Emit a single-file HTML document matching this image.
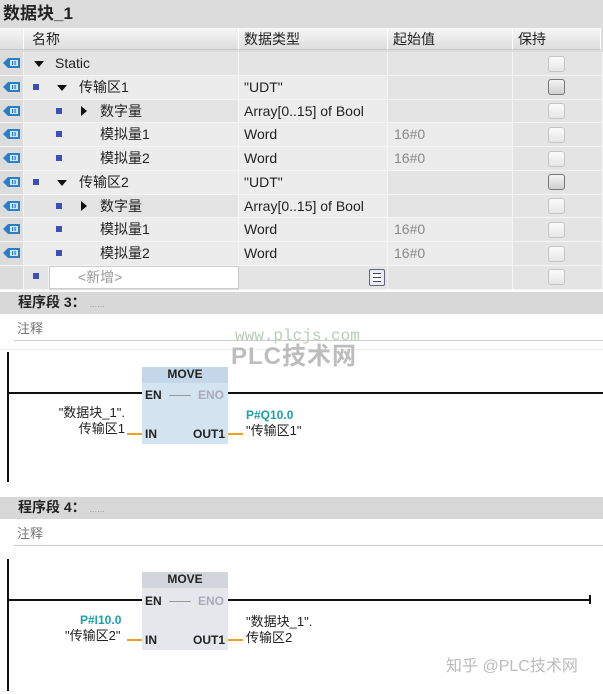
<!DOCTYPE html>
<html><head><meta charset="utf-8"><style>
*{margin:0;padding:0;box-sizing:border-box}
body{width:603px;height:694px;background:#fff;position:relative;overflow:hidden;font-family:"Liberation Sans","Noto Sans CJK SC",sans-serif;color:#222}
.a{position:absolute}
.t{font-size:14px;line-height:23px;white-space:nowrap}
.cell{position:absolute;background:#e4e4e4;border-right:1px solid #f4f4f4;border-bottom:1px solid #f4f4f4}
.sq{position:absolute;width:6px;height:6px;background:#3c4fb8}
.cb{position:absolute;left:548px;width:17px;height:16px;border:1px solid #c4c4c4;border-radius:3px;background:linear-gradient(#fbfbfb,#e6e6e6)}
.cb.d{border-color:#777;background:linear-gradient(#f4f4f4,#cfcfcf)}
.tri{position:absolute;width:0;height:0}
.dn{border-left:5px solid transparent;border-right:5px solid transparent;border-top:6px solid #111}
.rt{border-top:5px solid transparent;border-bottom:5px solid transparent;border-left:6px solid #111}
.g{color:#888}
.hdr{background:linear-gradient(#f6f6f6,#dedede);border-right:1px solid #fff;border-bottom:1px solid #c8c8c8}
</style></head><body>
<div class="a" style="left:0;top:0;width:603px;height:290px;background:#dcdcdc"></div>
<div class="a t" style="left:3px;top:2px;font-size:17px;font-weight:bold;line-height:24px">数据块_1</div>
<div class="a hdr" style="left:0;top:28px;width:24px;height:22px"></div>
<div class="a hdr t" style="left:24px;top:28px;width:215px;height:22px;padding-left:8px;line-height:22px">名称</div>
<div class="a hdr t" style="left:239px;top:28px;width:149px;height:22px;padding-left:5px;line-height:22px">数据类型</div>
<div class="a hdr t" style="left:388px;top:28px;width:125px;height:22px;padding-left:5px;line-height:22px">起始值</div>
<div class="a hdr t" style="left:513px;top:28px;width:88px;height:22px;padding-left:5px;line-height:22px">保持</div>

<div class="cell" style="left:0;top:52px;width:24px;height:24px;background:#dcdcdc"></div><div class="cell" style="left:24px;top:52px;width:215px;height:24px"></div><div class="cell" style="left:239px;top:52px;width:149px;height:24px"></div><div class="cell" style="left:388px;top:52px;width:125px;height:24px"></div><div class="cell" style="left:513px;top:52px;width:90px;height:24px"></div>
<div class="cell" style="left:0;top:76px;width:24px;height:24px;background:#dcdcdc"></div><div class="cell" style="left:24px;top:76px;width:215px;height:24px;background:#ececec"></div><div class="cell" style="left:239px;top:76px;width:149px;height:24px;background:#ececec"></div><div class="cell" style="left:388px;top:76px;width:125px;height:24px"></div><div class="cell" style="left:513px;top:76px;width:90px;height:24px"></div>
<div class="cell" style="left:0;top:100px;width:24px;height:23px;background:#dcdcdc"></div><div class="cell" style="left:24px;top:100px;width:215px;height:23px"></div><div class="cell" style="left:239px;top:100px;width:149px;height:23px;background:#ececec"></div><div class="cell" style="left:388px;top:100px;width:125px;height:23px"></div><div class="cell" style="left:513px;top:100px;width:90px;height:23px"></div>
<div class="cell" style="left:0;top:123px;width:24px;height:24px;background:#dcdcdc"></div><div class="cell" style="left:24px;top:123px;width:215px;height:24px;background:#ececec"></div><div class="cell" style="left:239px;top:123px;width:149px;height:24px;background:#ececec"></div><div class="cell" style="left:388px;top:123px;width:125px;height:24px;background:#ececec"></div><div class="cell" style="left:513px;top:123px;width:90px;height:24px"></div>
<div class="cell" style="left:0;top:147px;width:24px;height:24px;background:#dcdcdc"></div><div class="cell" style="left:24px;top:147px;width:215px;height:24px;background:#ececec"></div><div class="cell" style="left:239px;top:147px;width:149px;height:24px;background:#ececec"></div><div class="cell" style="left:388px;top:147px;width:125px;height:24px;background:#ececec"></div><div class="cell" style="left:513px;top:147px;width:90px;height:24px"></div>
<div class="cell" style="left:0;top:171px;width:24px;height:24px;background:#dcdcdc"></div><div class="cell" style="left:24px;top:171px;width:215px;height:24px;background:#ececec"></div><div class="cell" style="left:239px;top:171px;width:149px;height:24px;background:#ececec"></div><div class="cell" style="left:388px;top:171px;width:125px;height:24px"></div><div class="cell" style="left:513px;top:171px;width:90px;height:24px"></div>
<div class="cell" style="left:0;top:195px;width:24px;height:23px;background:#dcdcdc"></div><div class="cell" style="left:24px;top:195px;width:215px;height:23px"></div><div class="cell" style="left:239px;top:195px;width:149px;height:23px;background:#ececec"></div><div class="cell" style="left:388px;top:195px;width:125px;height:23px"></div><div class="cell" style="left:513px;top:195px;width:90px;height:23px"></div>
<div class="cell" style="left:0;top:218px;width:24px;height:24px;background:#dcdcdc"></div><div class="cell" style="left:24px;top:218px;width:215px;height:24px;background:#ececec"></div><div class="cell" style="left:239px;top:218px;width:149px;height:24px;background:#ececec"></div><div class="cell" style="left:388px;top:218px;width:125px;height:24px;background:#ececec"></div><div class="cell" style="left:513px;top:218px;width:90px;height:24px"></div>
<div class="cell" style="left:0;top:242px;width:24px;height:24px;background:#dcdcdc"></div><div class="cell" style="left:24px;top:242px;width:215px;height:24px;background:#ececec"></div><div class="cell" style="left:239px;top:242px;width:149px;height:24px;background:#ececec"></div><div class="cell" style="left:388px;top:242px;width:125px;height:24px;background:#ececec"></div><div class="cell" style="left:513px;top:242px;width:90px;height:24px"></div>
<div class="cell" style="left:0;top:266px;width:24px;height:24px;background:#dcdcdc"></div><div class="cell" style="left:24px;top:266px;width:25px;height:24px"></div><div class="a" style="left:49px;top:266px;width:190px;height:23px;background:#fff;border:1px solid #ccc"></div><div class="cell" style="left:239px;top:266px;width:149px;height:24px"></div><div class="cell" style="left:388px;top:266px;width:125px;height:24px"></div><div class="cell" style="left:513px;top:266px;width:90px;height:24px"></div>

<svg class="a" style="left:0;top:52px" width="24" height="216" viewBox="0 0 24 216">
<defs><g id="tg"><path d="M3 5 L8 0 H20 V10 H8 Z" fill="#2a7fc4"/><rect x="10" y="2" width="8" height="6" fill="#cfe6f6"/><rect x="12" y="3" width="1.2" height="4" fill="#2a7fc4"/><rect x="14.5" y="3" width="1.2" height="4" fill="#2a7fc4"/></g></defs>
<use href="#tg" y="6"/><use href="#tg" y="30"/><use href="#tg" y="54"/><use href="#tg" y="77"/><use href="#tg" y="101"/><use href="#tg" y="125"/><use href="#tg" y="149"/><use href="#tg" y="172"/><use href="#tg" y="196"/>
</svg>
<div class="sq" style="left:33px;top:84px"></div><div class="sq" style="left:33px;top:179px"></div><div class="sq" style="left:33px;top:273px"></div>
<div class="sq" style="left:56px;top:108px"></div><div class="sq" style="left:56px;top:131px"></div><div class="sq" style="left:56px;top:155px"></div>
<div class="sq" style="left:56px;top:203px"></div><div class="sq" style="left:56px;top:226px"></div><div class="sq" style="left:56px;top:250px"></div>
<div class="tri dn" style="left:34px;top:61px"></div>
<div class="tri dn" style="left:57px;top:85px"></div>
<div class="tri dn" style="left:57px;top:180px"></div>
<div class="tri rt" style="left:81px;top:106px"></div>
<div class="tri rt" style="left:81px;top:201px"></div>

<div class="a t" style="left:55px;top:52px">Static</div>
<div class="a t" style="left:79px;top:76px">传输区1</div>
<div class="a t" style="left:100px;top:100px">数字量</div>
<div class="a t" style="left:100px;top:123px">模拟量1</div>
<div class="a t" style="left:100px;top:147px">模拟量2</div>
<div class="a t" style="left:79px;top:171px">传输区2</div>
<div class="a t" style="left:100px;top:195px">数字量</div>
<div class="a t" style="left:100px;top:218px">模拟量1</div>
<div class="a t" style="left:100px;top:242px">模拟量2</div>
<div class="a t g" style="left:78px;top:266px;color:#999">&lt;新增&gt;</div>
<div class="a" style="left:369px;top:269px;width:16px;height:17px;border:1px solid #667;background:#e8eef8;border-radius:2px"><div style="margin:3px 3px;height:9px;border-top:1px solid #446;border-bottom:1px solid #446;background:linear-gradient(#fff 3px,#446 3px,#446 4px,#fff 4px)"></div></div>

<div class="a t" style="left:244px;top:76px">"UDT"</div>
<div class="a t" style="left:244px;top:100px">Array[0..15] of Bool</div>
<div class="a t" style="left:244px;top:123px">Word</div>
<div class="a t" style="left:244px;top:147px">Word</div>
<div class="a t" style="left:244px;top:171px">"UDT"</div>
<div class="a t" style="left:244px;top:195px">Array[0..15] of Bool</div>
<div class="a t" style="left:244px;top:218px">Word</div>
<div class="a t" style="left:244px;top:242px">Word</div>
<div class="a t g" style="left:394px;top:123px">16#0</div>
<div class="a t g" style="left:394px;top:147px">16#0</div>
<div class="a t g" style="left:394px;top:218px">16#0</div>
<div class="a t g" style="left:394px;top:242px">16#0</div>

<div class="cb" style="top:56px"></div><div class="cb d" style="top:79px"></div><div class="cb" style="top:103px"></div><div class="cb" style="top:127px"></div><div class="cb" style="top:151px"></div><div class="cb d" style="top:174px"></div><div class="cb" style="top:198px"></div><div class="cb" style="top:222px"></div><div class="cb" style="top:246px"></div><div class="cb" style="top:269px"></div>

<div class="a" style="left:0;top:292px;width:603px;height:22px;background:#d8d8d8"></div>
<div class="a t" style="left:18px;top:291px;font-weight:bold;font-size:14px">程序段 3： <span style="font-weight:normal;color:#999;font-size:9px">......</span></div>
<div class="a" style="left:14px;top:317px;width:589px;height:24px;border-bottom:1px solid #ccc"></div>
<div class="a t" style="left:17px;top:317px;font-size:13px;color:#777">注释</div>
<div class="a" style="left:0;top:349px;width:603px;height:1px;background:#eee"></div>
<div class="a t" style="left:235px;top:325px;font-family:'Liberation Mono',monospace;color:#b8ccb8;font-size:16px">www.plcjs.com</div>
<div class="a t" style="left:231px;top:343px;font-size:24px;line-height:28px;font-weight:bold;color:#bdbdbd;letter-spacing:1px">PLC技术网</div>
<div class="a" style="left:7px;top:352px;width:2px;height:130px;background:#111"></div>
<div class="a" style="left:7px;top:392px;width:135px;height:2px;background:#111"></div>
<div class="a" style="left:227px;top:392px;width:376px;height:2px;background:#111"></div>
<div class="a" style="left:142px;top:367px;width:86px;height:77px;background:#d3e3f0"></div>
<div class="a" style="left:142px;top:367px;width:86px;height:16px;background:#c3d7e8"></div>
<div class="a t" style="left:142px;top:364px;width:86px;text-align:center;font-size:12px;font-weight:bold;line-height:20px">MOVE</div>
<div class="a t" style="left:145px;top:384px;font-size:12px;font-weight:bold">EN</div>
<div class="a" style="left:169px;top:395px;width:22px;height:1px;background:#999"></div>
<div class="a t" style="left:198px;top:384px;font-size:12px;font-weight:bold;color:#aab">ENO</div>
<div class="a t" style="left:145px;top:424px;font-size:12px;font-weight:bold;line-height:20px">IN</div>
<div class="a t" style="left:193px;top:424px;font-size:12px;font-weight:bold;line-height:20px">OUT1</div>
<div class="a" style="left:127px;top:433px;width:15px;height:2px;background:#f0a020"></div>
<div class="a" style="left:228px;top:433px;width:15px;height:2px;background:#f0a020"></div>
<div class="a t" style="left:55px;top:405px;font-size:13px;line-height:16px;text-align:right;width:70px">"数据块_1".<br>传输区1</div>
<div class="a t" style="left:246px;top:407px;font-size:12px;font-weight:bold;color:#1aa0a8;line-height:16px">P#Q10.0</div>
<div class="a t" style="left:246px;top:423px;font-size:13px;line-height:16px">"传输区1"</div>

<div class="a" style="left:0;top:497px;width:603px;height:22px;background:#d8d8d8"></div>
<div class="a t" style="left:18px;top:496px;font-weight:bold;font-size:14px">程序段 4： <span style="font-weight:normal;color:#999;font-size:9px">......</span></div>
<div class="a" style="left:14px;top:522px;width:589px;height:24px;border-bottom:1px solid #ccc"></div>
<div class="a t" style="left:17px;top:522px;font-size:13px;color:#777">注释</div>
<div class="a" style="left:7px;top:559px;width:2px;height:132px;background:#111"></div>
<div class="a" style="left:7px;top:599px;width:135px;height:2px;background:#111"></div>
<div class="a" style="left:227px;top:599px;width:363px;height:2px;background:#111"></div>
<div class="a" style="left:589px;top:595px;width:2px;height:9px;background:#111"></div>
<div class="a" style="left:142px;top:572px;width:86px;height:78px;background:#e6e7ec"></div>
<div class="a" style="left:142px;top:572px;width:86px;height:16px;background:#d3d5dc"></div>
<div class="a t" style="left:142px;top:569px;width:86px;text-align:center;font-size:12px;font-weight:bold;line-height:20px">MOVE</div>
<div class="a t" style="left:145px;top:590px;font-size:12px;font-weight:bold">EN</div>
<div class="a" style="left:169px;top:601px;width:22px;height:1px;background:#999"></div>
<div class="a t" style="left:198px;top:590px;font-size:12px;font-weight:bold;color:#aab">ENO</div>
<div class="a t" style="left:145px;top:630px;font-size:12px;font-weight:bold;line-height:20px">IN</div>
<div class="a t" style="left:193px;top:630px;font-size:12px;font-weight:bold;line-height:20px">OUT1</div>
<div class="a" style="left:127px;top:639px;width:15px;height:2px;background:#f0a020"></div>
<div class="a" style="left:228px;top:639px;width:15px;height:2px;background:#f0a020"></div>
<div class="a t" style="left:80px;top:612px;font-size:12px;font-weight:bold;color:#1aa0a8;line-height:16px">P#I10.0</div>
<div class="a t" style="left:65px;top:628px;font-size:13px;line-height:16px">"传输区2"</div>
<div class="a t" style="left:246px;top:614px;font-size:13px;line-height:16px">"数据块_1".<br>传输区2</div>
<div class="a t" style="left:446px;top:655px;font-size:16px;color:#bbb;line-height:24px">知乎 @PLC技术网</div>
</body></html>
